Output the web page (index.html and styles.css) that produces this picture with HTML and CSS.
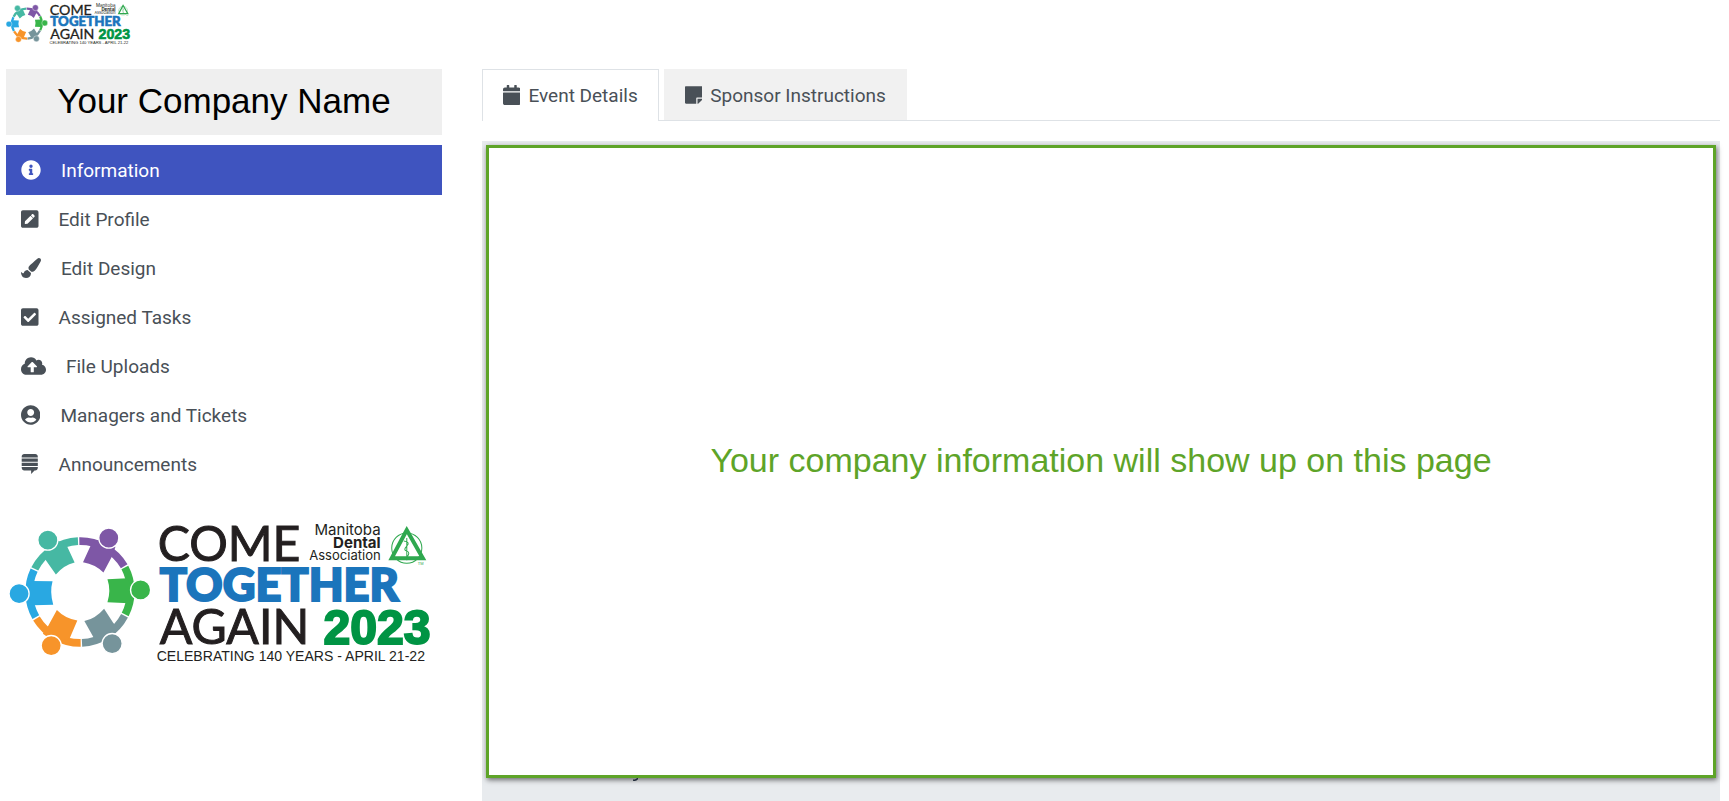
FILE: index.html
```html
<!DOCTYPE html>
<html lang="en">
<head>
    <meta charset="UTF-8">
    <meta name="viewport" content="width=device-width, initial-scale=1.0">
    <title>Sponsor Portal</title>
    <link rel="stylesheet" href="styles.css">
</head>
<body>
    <header class="topbar">
        <a href="#" class="brand" aria-label="Come Together Again 2023">
            <svg class="logo" viewBox="0 0 426 143"><use href="#event-logo"/></svg>
        </a>
    </header>
    <div class="layout">
        <aside class="sidebar">
            <h1 class="company-name">Your Company Name</h1>
            <nav class="side-nav">
                <a href="#" class="active">
                    <svg class="icon" viewBox="0 0 512 512"><path d="M256 8C119.043 8 8 119.083 8 256c0 136.997 111.043 248 248 248s248-111.003 248-248C504 119.083 392.957 8 256 8zm0 110c23.196 0 42 18.804 42 42s-18.804 42-42 42-42-18.804-42-42 18.804-42 42-42zm56 254c0 6.627-5.373 12-12 12h-88c-6.627 0-12-5.373-12-12v-24c0-6.627 5.373-12 12-12h12v-64h-12c-6.627 0-12-5.373-12-12v-24c0-6.627 5.373-12 12-12h64c6.627 0 12 5.373 12 12v100h12c6.627 0 12 5.373 12 12v24z"/></svg>
                    Information
                </a>
                <a href="#">
                    <svg class="icon" viewBox="0 0 448 512"><path d="M400 480H48c-26.5 0-48-21.5-48-48V80c0-26.5 21.5-48 48-48h352c26.5 0 48 21.5 48 48v352c0 26.5-21.5 48-48 48zM238.1 177.9L102.4 313.6l-6.3 57.1c-.8 7.6 5.6 14.1 13.3 13.3l57.1-6.3L302.2 242c2.3-2.3 2.3-6.1 0-8.5L246.7 178c-2.5-2.4-6.3-2.4-8.6-.1zM345 165.1L314.9 135c-9.4-9.4-24.6-9.4-33.9 0l-23.1 23.1c-2.3 2.3-2.3 6.1 0 8.5l55.5 55.5c2.3 2.3 6.1 2.3 8.5 0L345 199c9.3-9.3 9.3-24.5 0-33.9z"/></svg>
                    Edit Profile
                </a>
                <a href="#">
                    <svg class="icon" viewBox="0 0 512 512"><path d="M167.02 309.34c-40.12 2.58-76.53 17.86-97.19 72.3-2.35 6.21-8 9.98-14.59 9.98-11.11 0-45.46-27.67-55.25-34.35C0 439.62 37.93 512 128 512c75.86 0 128-43.77 128-120.19 0-3.11-.65-6.08-.97-9.13l-88.01-73.34zM457.89 0c-15.16 0-29.37 6.71-40.21 16.45C213.27 199.05 192 203.34 192 257.09c0 13.7 3.25 26.76 8.73 38.7l63.82 53.18c7.21 1.8 14.64 3.03 22.39 3.03 62.11 0 98.11-45.47 211.16-256.46 7.38-14.35 13.9-29.85 13.9-45.99C512 20.64 486 0 457.89 0z"/></svg>
                    Edit Design
                </a>
                <a href="#">
                    <svg class="icon" viewBox="0 0 448 512"><path d="M400 480H48c-26.51 0-48-21.49-48-48V80c0-26.51 21.49-48 48-48h352c26.51 0 48 21.49 48 48v352c0 26.51-21.49 48-48 48zm-204.686-98.059l184-184c6.248-6.248 6.248-16.379 0-22.627l-22.627-22.627c-6.248-6.248-16.379-6.249-22.628 0L184 302.745l-70.059-70.059c-6.248-6.248-16.379-6.248-22.628 0l-22.627 22.627c-6.248 6.248-6.248 16.379 0 22.627l104 104c6.249 6.25 16.379 6.25 22.628.001z"/></svg>
                    Assigned Tasks
                </a>
                <a href="#">
                    <svg class="icon" viewBox="0 0 640 512"><path d="M537.6 226.6c4.1-10.7 6.4-22.4 6.4-34.6 0-53-43-96-96-96-19.7 0-38.1 6-53.3 16.2C367 64.2 315.3 32 256 32c-88.4 0-160 71.6-160 160 0 2.7.1 5.4.2 8.1C40.2 219.8 0 273.2 0 336c0 79.5 64.5 144 144 144h368c70.7 0 128-57.3 128-128 0-61.9-44-113.6-102.4-125.4zM393.4 288H328v112c0 8.8-7.2 16-16 16h-48c-8.8 0-16-7.2-16-16V288h-65.4c-14.3 0-21.4-17.2-11.3-27.3l105.4-105.4c6.2-6.2 16.4-6.2 22.6 0l105.4 105.4c10.1 10.1 2.9 27.3-11.3 27.3z"/></svg>
                    File Uploads
                </a>
                <a href="#">
                    <svg class="icon" viewBox="0 0 496 512"><path d="M248 8C111 8 0 119 0 256s111 248 248 248 248-111 248-248S385 8 248 8zm0 96c48.6 0 88 39.4 88 88s-39.4 88-88 88-88-39.4-88-88 39.4-88 88-88zm0 344c-58.7 0-111.3-26.6-146.5-68.2 18.8-35.4 55.6-59.8 98.5-59.8 2.4 0 4.8.4 7.1 1.1 13 4.2 26.6 6.9 40.9 6.9 14.3 0 28-2.7 40.9-6.9 2.3-.7 4.7-1.1 7.1-1.1 42.9 0 79.7 24.4 98.5 59.8C359.3 421.4 306.7 448 248 448z"/></svg>
                    Managers and Tickets
                </a>
                <a href="#">
                    <svg class="icon" viewBox="0 0 448 512"><path d="M17.7 332.3h412.7v22c0 37.7-29.3 68-65.3 68h-19L259.3 512v-89.7H83c-36 0-65.3-30.3-65.3-68v-22zm0-23.6h412.7v-85H17.7v85zm0-109.4h412.7v-85H17.7v85zM365 0H83C47 0 17.7 30.3 17.7 67.7V90h412.7V67.7C430.3 30.3 401 0 365 0z"/></svg>
                    Announcements
                </a>
            </nav>
            <svg class="logo" viewBox="0 0 426 143" role="img" aria-label="Come Together Again 2023">
                <g id="event-logo">
                    <!-- ring of people -->
                    <g transform="translate(-9 -12) scale(.33333)">
                        <g fill="none" stroke-width="23">
                            <path stroke="#46b8a3" d="M104 176A152 152 0 0 1 233 93"/>
                            <path stroke="#7e57a6" d="M237 93A152 152 0 0 1 371 168"/>
                            <path stroke="#39b54a" d="M373 172A152 152 0 0 1 374 312"/>
                            <path stroke="#76949b" d="M372 316A152 152 0 0 1 245 397"/>
                            <path stroke="#f7942a" d="M241 397A152 152 0 0 1 109 324"/>
                            <path stroke="#29a8e2" d="M107 320A152 152 0 0 1 102 180"/>
                        </g>
                        <path fill="#46b8a3" d="M126 136L136 149L167 193Q190 165 223 157L200 108L170 90Z"/>
                        <path fill="#7e57a6" d="M272 104L248 156Q285 162 309 187L334 140L345 110L300 85Z"/>
                        <path fill="#39b54a" d="M321 207Q332 240 321 276L386 279L398 240L380 204Z"/>
                        <path fill="#76949b" d="M311 295Q285 325 252 332L280 382L320 395L350 350L338 337Z"/>
                        <path fill="#f7942a" d="M170 299Q195 325 231 330L208 384L165 395L128 370L143 348Z"/>
                        <path fill="#29a8e2" d="M157 213Q148 245 159 283L100 285L80 250L95 212Z"/>
                        <g stroke="#fff" stroke-width="4">
                            <circle cx="143" cy="90" r="30" fill="#46b8a3"/>
                            <circle cx="325" cy="84" r="30" fill="#7e57a6"/>
                            <circle cx="420" cy="239" r="30" fill="#39b54a"/>
                            <circle cx="335" cy="399" r="30" fill="#76949b"/>
                            <circle cx="153" cy="405" r="30" fill="#f7942a"/>
                            <circle cx="57" cy="250" r="30" fill="#29a8e2"/>
                        </g>
                    </g>
                    <text class="logo-light" x="148" y="39">COME</text>
                    <text class="logo-blue" x="150" y="79">TOGETHER</text>
                    <text class="logo-light" x="150" y="121">AGAIN</text>
                    <text class="logo-green" x="313" y="121">2023</text>
                    <text class="logo-tagline" x="147" y="138">CELEBRATING 140 YEARS - APRIL 21-22</text>
                    <text class="logo-manitoba" x="370" y="13">Manitoba</text>
                    <text class="logo-dental" x="370" y="26">Dental</text>
                    <text class="logo-assoc" x="370" y="38">Association</text>
                    <!-- association emblem -->
                    <g fill="none" stroke="#2fa84f">
                        <path stroke-width="4" d="M396 8L381 36H412Z"/>
                        <circle cx="396" cy="26" r="15"/>
                        <path d="M396 16V38M393 19Q400 20 396 24T396 29T396 35"/>
                    </g>
                    <text class="logo-tm" x="407" y="43">TM</text>
                </g>
            </svg>
        </aside>
        <main class="content">
            <nav class="tabs">
                <a href="#" class="tab active">
                    <svg class="icon" viewBox="0 0 448 512"><path d="M12 192h424c6.6 0 12 5.4 12 12v260c0 26.5-21.5 48-48 48H48c-26.5 0-48-21.5-48-48V204c0-6.6 5.4-12 12-12zm436-44v-36c0-26.5-21.5-48-48-48h-48V12c0-6.6-5.4-12-12-12h-40c-6.6 0-12 5.4-12 12v52H160V12c0-6.6-5.4-12-12-12h-40c-6.6 0-12 5.4-12 12v52H48C21.5 64 0 85.5 0 112v36c0 6.6 5.4 12 12 12h424c6.6 0 12-5.4 12-12z"/></svg>
                    Event Details
                </a>
                <a href="#" class="tab">
                    <svg class="icon" viewBox="0 0 448 512"><path d="M312 320h136V56c0-13.3-10.7-24-24-24H24C10.7 32 0 42.7 0 56v400c0 13.3 10.7 24 24 24h264V344c0-13.2 10.8-24 24-24zm129 55l-98 98c-4.5 4.5-10.6 7-17 7h-6V352h128v6.1c0 6.3-2.5 12.4-7 16.9z"/></svg>
                    Sponsor Instructions
                </a>
            </nav>
            <section class="panel">
                <div class="notice">
                    <p>Your company information will show up on this page</p>
                </div>
                <svg class="tail" viewBox="0 0 5 3"><path d="M0 2Q3 3 5 0" fill="none" stroke="#222b3a" stroke-width="1.5"/></svg>
            </section>
        </main>
    </div>
</body>
</html>
```
FILE: styles.css
```css
* {
    box-sizing: border-box;
    margin: 0;
    padding: 0;
}

body {
    min-height: 100vh;
    display: flex;
    flex-direction: column;
    font-family: Roboto, sans-serif;
    font-size: 19px;
    color: #495057;
    background-color: white;
}

a {
    color: inherit;
    text-decoration: none;
}

.topbar {
    height: 69px;
    padding: 3px 6px;
}

.brand {
    display: block;
    width: 126px;
}

.layout {
    flex-grow: 1;
    display: grid;
    grid-template-columns: 25fr 71fr;
    gap: 40px;
    padding: 0 9px 0 6px;
}

.icon {
    height: 20px;
    width: auto;
    fill: currentColor;
}

/* sidebar */
.company-name {
    padding: 0 16px 2px;
    margin-bottom: 10px;
    background-color: #efefef;
    color: black;
    font-family: "Liberation Sans", Arial, sans-serif;
    font-size: 35px;
    font-weight: normal;
    line-height: 64px;
    text-align: center;
}

.side-nav a {
    display: flex;
    align-items: center;
    gap: 20px;
    height: 50px;
    margin-bottom: -1px;
    padding: 0 15px;
}

.side-nav .active {
    background-color: #3f54bf;
    color: white;
}

.sidebar .logo {
    padding: 0 5px 0 3px;
    margin-top: 34px;
}

/* event logo */
.logo {
    display: block;
    width: 100%;
    overflow: visible;
    font-family: "Liberation Sans", Arial, sans-serif;
}

.logo-light {
    font-family: Lato, sans-serif;
    font-size: 48px;
    fill: #231f20;
    stroke: #231f20;
}

.logo-blue {
    font-family: Lato, sans-serif;
    font-size: 45px;
    font-weight: 900;
    fill: #1b75bc;
    stroke: #1b75bc;
    stroke-width: 2px;
}

.logo-green {
    font-size: 48px;
    font-weight: bold;
    fill: #009444;
    stroke: #009444;
    stroke-width: 2px;
}

.logo-tagline {
    font-size: 14px;
    fill: #231f20;
}

.logo-manitoba,
.logo-dental,
.logo-assoc {
    text-anchor: end;
    font-family: Inter, sans-serif;
    font-size: 15px;
    fill: #231f20;
}

.logo-dental {
    font-weight: bold;
}

.logo-assoc {
    font-size: 13px;
}

.logo-tm {
    font-size: 4px;
    fill: #2fa84f;
}

/* content */
.content {
    display: flex;
    flex-direction: column;
}

.tabs {
    display: flex;
    gap: 5px;
    border-bottom: 1px solid #dee2e6;
    margin-bottom: 20px;
}

.tab {
    display: flex;
    align-items: center;
    gap: 8px;
    height: 51px;
    padding: 0 20px;
    border: 1px solid #f1f1f1;
    border-bottom: none;
    background-color: #f1f1f1;
}

.tab.active {
    height: 52px;
    margin-bottom: -1px;
    padding-bottom: 1px;
    border-color: #dee2e6;
    background-color: white;
}

.panel {
    flex-grow: 1;
    display: flex;
    position: relative;
    padding: 4px 4px 23px;
    background-color: #e8ebee;
}

.notice {
    flex-grow: 1;
    display: flex;
    align-items: center;
    justify-content: center;
    padding-bottom: 2px;
    border: 3px solid #5ea428;
    background-color: white;
    box-shadow: 1px 2px 5px rgba(0, 0, 0, 0.55);
    color: #5ea428;
    font-family: "Liberation Sans", Arial, sans-serif;
    font-size: 34px;
    text-align: center;
}

/* sits just under the bottom edge of the notice */
.tail {
    position: absolute;
    left: 151px;
    bottom: 20px;
    width: 5px;
    height: 3px;
}
```
